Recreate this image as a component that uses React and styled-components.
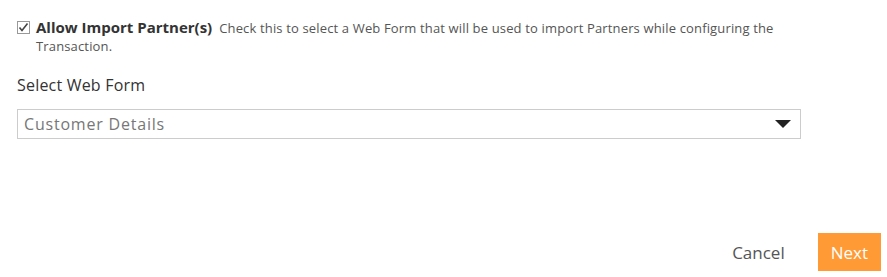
import React from 'react';
import styled, { createGlobalStyle } from 'styled-components';

const GlobalStyle = createGlobalStyle`
   html, body {
      margin: 0;
      padding: 0;
      background: #fff;
   }
   body {
      font-family: 'Open Sans', Lato, sans-serif;
      color: #333;
   }
`;

const Page = styled.div`
   width: 887px;
   height: 277px;
   box-sizing: border-box;
   padding: 18px 6px 6px 17px;
   display: flex;
   flex-direction: column;
`;

const OptionRow = styled.div`
   display: flex;
   align-items: flex-start;
   padding-right: 100px;
`;

const CheckBox = styled.span`
   flex: none;
   width: 13px;
   height: 13px;
   margin: 3px 6px 0 0;
   display: inline-flex;
`;

const OptionText = styled.div`
   font-size: 13px;
   line-height: 18px;
   letter-spacing: 0.15px;
   color: #555;
`;

const OptionLabel = styled.span`
   font-size: 15px;
   line-height: 18px;
   font-weight: 700;
   letter-spacing: 0;
   color: #333;
   margin-right: 7px;
`;

const FieldLabel = styled.div`
   margin-top: 20px;
   font-size: 16px;
   line-height: 20px;
   letter-spacing: 0.2px;
   color: #333;
`;

const Select = styled.div`
   margin-top: 14px;
   width: 784px;
   height: 30px;
   box-sizing: border-box;
   border: 1px solid #ccc;
   display: flex;
   align-items: center;
   justify-content: space-between;
   padding: 0 9px 0 6px;
   font-size: 16px;
   letter-spacing: 0.8px;
   color: #777;
`;

const Arrow = styled.span`
   width: 0;
   height: 0;
   border-left: 8px solid transparent;
   border-right: 8px solid transparent;
   border-top: 8px solid #222;
`;

const Footer = styled.div`
   margin-top: auto;
   display: flex;
   justify-content: flex-end;
   align-items: center;
   gap: 33px;
`;

const Button = styled.button`
   font-family: inherit;
   font-size: 17px;
   border: none;
   cursor: pointer;
   height: 38px;
   padding: 0 ${(p) => (p.primary ? '13px' : '0')};
   background: ${(p) => (p.primary ? '#ff9a35' : 'transparent')};
   color: ${(p) => (p.primary ? '#fff' : '#555')};
`;

const CheckIcon = () => (
   <svg width="13" height="13" viewBox="0 0 13 13">
      <rect x="0.5" y="0.5" width="12" height="12" fill="#fff" stroke="#999" />
      <path d="M2.5 6.5 L5 9.5 L10.5 2.5" fill="none" stroke="#444" strokeWidth="1.6" />
   </svg>
);

const App = () => {
   return (
      <>
         <GlobalStyle />
         <Page>
            <OptionRow>
               <CheckBox>
                  <CheckIcon />
               </CheckBox>
               <OptionText>
                  <OptionLabel>Allow Import Partner(s)</OptionLabel>
                  Check this to select a Web Form that will be used to import
                  Partners while configuring the Transaction.
               </OptionText>
            </OptionRow>

            <FieldLabel>Select Web Form</FieldLabel>
            <Select>
               <span>Customer Details</span>
               <Arrow />
            </Select>

            <Footer>
               <Button>Cancel</Button>
               <Button primary>Next</Button>
            </Footer>
         </Page>
      </>
   );
};

export default App;
